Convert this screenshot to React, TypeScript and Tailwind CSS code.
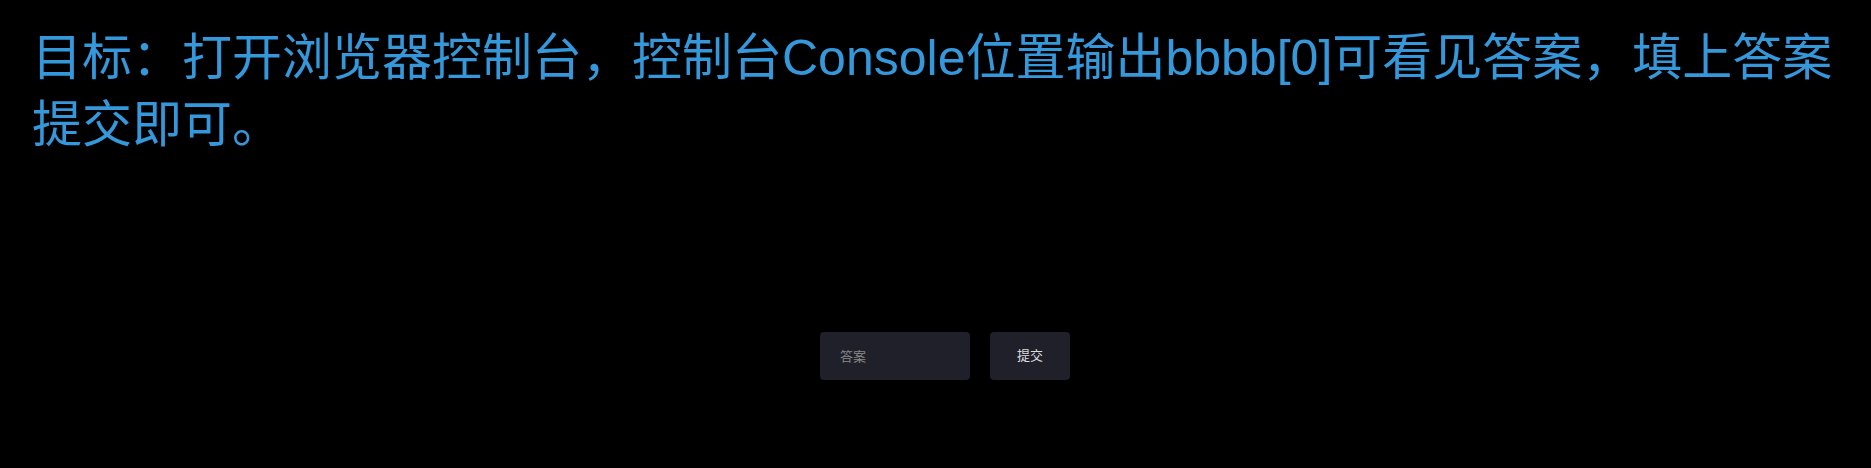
export default function App() {
  return (
    <div
      className="min-h-[468px] bg-black"
      style={{ fontFamily: '"Liberation Sans", "Noto Sans CJK SC", sans-serif' }}
    >
      <div className="pl-[32px] pr-[20px] pt-[25px]">
        <h1 className="text-[50px] leading-[67px] font-normal text-[#3498db]">
          目标：打开浏览器控制台，控制台Console位置输出bbbb[0]可看见答案，填上答案提交即可。
        </h1>
      </div>
      <div className="mt-[173px] flex justify-center pl-[19px] gap-[20px]">
        <input
          type="text"
          placeholder="答案"
          className="w-[150px] h-[48px] rounded-[4px] bg-[#20202b] px-[20px] text-[13px] text-[#ddd] placeholder:text-[#888] outline-none"
        />
        <button className="w-[80px] h-[48px] rounded-[4px] bg-[#20202b] text-[13px] text-[#dcdcdc]">
          提交
        </button>
      </div>
    </div>
  );
}
